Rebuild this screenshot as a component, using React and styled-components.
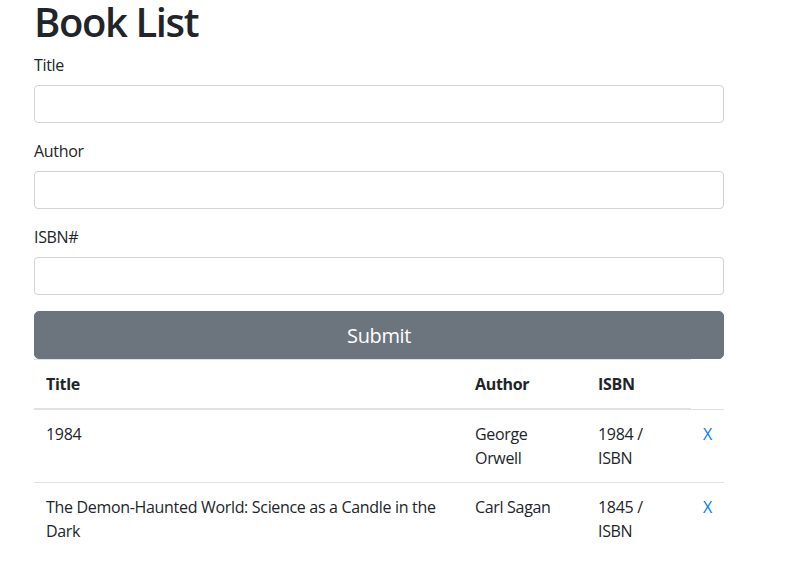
import React from "react";
import styled, { createGlobalStyle } from "styled-components";

const GlobalStyle = createGlobalStyle`
  html, body {
    margin: 0;
    padding: 0;
    background: #fff;
  }
  body {
    font-family: "Segoe UI", "Open Sans", "Noto Sans", sans-serif;
    font-size: 16px;
    line-height: 1.5;
    color: #212529;
    letter-spacing: -0.02em;
  }
  * {
    box-sizing: border-box;
  }
`;

const books = [
  { title: "1984", author: "George Orwell", isbn: "1984 / ISBN" },
  {
    title: "The Demon-Haunted World: Science as a Candle in the Dark",
    author: "Carl Sagan",
    isbn: "1845 / ISBN",
  },
];

function App() {
  return (
    <>
      <GlobalStyle />
      <Container>
        <Heading>Book List</Heading>
        <form onSubmit={e => e.preventDefault()}>
          <FormGroup>
            <Label htmlFor="title">Title</Label>
            <Input id="title" type="text" />
          </FormGroup>
          <FormGroup>
            <Label htmlFor="author">Author</Label>
            <Input id="author" type="text" />
          </FormGroup>
          <FormGroup>
            <Label htmlFor="isbn">ISBN#</Label>
            <Input id="isbn" type="text" />
          </FormGroup>
          <SubmitButton type="submit">Submit</SubmitButton>
        </form>
        <Table>
          <colgroup>
            <col style={{ width: 429 }} />
            <col style={{ width: 123 }} />
            <col style={{ width: 105 }} />
            <col style={{ width: 33 }} />
          </colgroup>
          <thead>
            <tr>
              <Th>Title</Th>
              <Th>Author</Th>
              <Th>ISBN</Th>
            </tr>
          </thead>
          <tbody>
            {books.map(book => (
              <tr key={book.title}>
                <Td>{book.title}</Td>
                <Td>{book.author}</Td>
                <Td>{book.isbn}</Td>
                <Td>
                  <DeleteLink href="#">X</DeleteLink>
                </Td>
              </tr>
            ))}
          </tbody>
        </Table>
      </Container>
    </>
  );
}

const Container = styled.div`
  width: 690px;
  margin-left: 34px;
`;

const Heading = styled.h1`
  font-size: 40px;
  font-weight: 600;
  line-height: 44px;
  margin: 0 0 9px;
  letter-spacing: -0.035em;
`;

const FormGroup = styled.div`
  margin-bottom: 16px;
`;

const Label = styled.label`
  display: inline-block;
  margin-bottom: 8px;
`;

const Input = styled.input`
  display: block;
  width: 100%;
  height: 38px;
  padding: 6px 12px;
  font: inherit;
  color: #495057;
  background: #fff;
  border: 1px solid #ced4da;
  border-radius: 4px;
`;

const SubmitButton = styled.button`
  display: block;
  width: 100%;
  padding: 9px 16px 7px;
  font-family: inherit;
  font-size: 20px;
  line-height: 1.5;
  letter-spacing: -0.02em;
  color: #fff;
  background: #6c757d;
  border: 1px solid #6c757d;
  border-radius: 5px;
`;

const Table = styled.table`
  width: 100%;
  table-layout: fixed;
  border-collapse: collapse;
  color: #212529;
`;

const Th = styled.th`
  padding: 12px;
  text-align: left;
  font-weight: 700;
  vertical-align: bottom;
  border-top: 1px solid #dee2e6;
  border-bottom: 2px solid #dee2e6;
`;

const Td = styled.td`
  padding: 12px;
  vertical-align: top;
  border-top: 1px solid #dee2e6;
`;

const DeleteLink = styled.a`
  color: #007bff;
  text-decoration: none;
`;

export default App;
